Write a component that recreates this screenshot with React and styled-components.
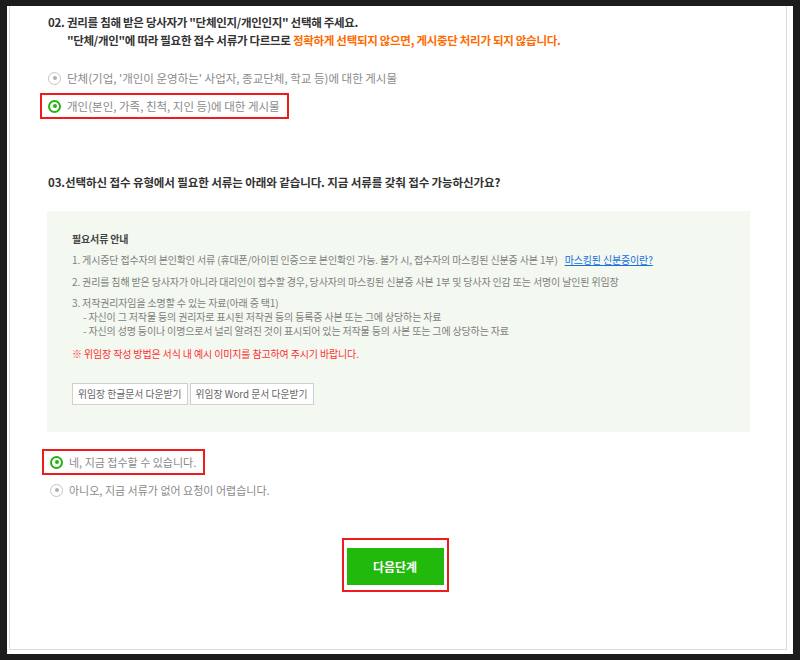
import React from "react"
import styled, { createGlobalStyle } from "styled-components"

const GlobalStyle = createGlobalStyle`
  html, body {
    margin: 0;
    padding: 0;
    background: #1c1c1c;
  }
  body {
    font-family: "Noto Sans CJK KR", "Noto Sans", sans-serif;
    color: #333;
  }
`

const Frame = styled.div`
  margin: 6px 0 0 7px;
  width: 786px;
  height: 648px;
  box-sizing: border-box;
  background: #fff;
  padding: 0 6px 4px 2px;
  display: flex;
`

const Panel = styled.div`
  flex: 1;
  border: 1px solid #dcdcdc;
  border-top: none;
  padding: 7px 36px 0 30px;
  display: flex;
  flex-direction: column;
`

const Question = styled.div`
  display: flex;
  margin-left: 8px;
  font-size: 11.5px;
  font-weight: 700;
  line-height: 18px;
  color: #333;
  letter-spacing: ${p => (p.$tight ? "-0.3px" : "-0.1px")};
`

const QNum = styled.span`
  flex: 0 0 auto;
  width: 15px;
  margin-right: 4px;
`

const Warn = styled.span`
  color: #ff6a00;
`

const Options = styled.div`
  display: flex;
  flex-direction: column;
  align-items: flex-start;
  gap: ${p => p.$gap || 2}px;
  margin-top: ${p => p.$top || 0}px;
  margin-left: ${p => p.$left || 0}px;
`

const Option = styled.label`
  display: inline-flex;
  align-items: center;
  gap: 6px;
  height: 26px;
  box-sizing: border-box;
  border: 2px solid ${p => (p.$marked ? "#ee1c1c" : "transparent")};
  padding: 0 7px 0 6px;
  font-size: ${p => p.$size || 11.5}px;
  color: #8a8a8a;
  cursor: pointer;
`

const Radio = styled.span`
  position: relative;
  width: 13px;
  height: 13px;
  box-sizing: border-box;
  border-radius: 50%;
  border: ${p => (p.$on ? "2px solid #26b30f" : "1px solid #c4c4c4")};
  flex: 0 0 auto;

  &::after {
    content: "";
    position: absolute;
    left: 50%;
    top: 50%;
    width: 4px;
    height: 4px;
    margin: -2px 0 0 -2px;
    border-radius: 50%;
    background: ${p => (p.$on ? "#26b30f" : "#b0b0b0")};
  }
`

const Guide = styled.div`
  margin: 20px 0 0 7px;
  background: #f3f8f0;
  padding: 21px 20px 27px 25px;
  font-size: 10px;
  line-height: 14px;
  color: #808080;
  letter-spacing: -0.15px;
`

const GuideTitle = styled.div`
  font-weight: 700;
  color: #444;
  margin-bottom: 7px;
`

const Item = styled.div`
  margin-top: ${p => p.$top || 0}px;
`

const Sub = styled.div`
  padding-left: 11px;
`

const Link = styled.a`
  color: #1a6fe0;
  text-decoration: underline;
  margin-left: 7px;
`

const Note = styled.div`
  margin-top: 9px;
  color: #ff3030;
`

const Downloads = styled.div`
  display: flex;
  gap: 2px;
  margin-top: 22px;
`

const DownButton = styled.button`
  margin: 0;
  height: 22px;
  padding: 0 5px;
  background: #fff;
  border: 1px solid #cfcfcf;
  font-family: inherit;
  font-size: 9.8px;
  color: #666;
  cursor: pointer;
`

const Footer = styled.div`
  display: flex;
  justify-content: center;
  margin-top: 35px;
`

const Highlight = styled.div`
  border: 2px solid #ee1c1c;
  padding: 8px 3px 5px 3px;
`

const NextButton = styled.button`
  display: block;
  width: 97px;
  height: 37px;
  border: none;
  background: #21b90c;
  color: #fff;
  font-family: inherit;
  font-size: 12px;
  font-weight: 700;
  cursor: pointer;
`

const SecondHeading = styled(Question)`
  margin-top: 54px;
`

export default function App() {
  return (
    <>
      <GlobalStyle />
      <Frame>
        <Panel>
          <Question $tight>
            <QNum>02.</QNum>
            <div>
              권리를 침해 받은 당사자가 "단체인지/개인인지" 선택해 주세요.
              <br />
              "단체/개인"에 따라 필요한 접수 서류가 다르므로{" "}
              <Warn>정확하게 선택되지 않으면, 게시중단 처리가 되지 않습니다.</Warn>
            </div>
          </Question>

          <Options $top={16}>
            <Option>
              <Radio />
              단체(기업, '개인이 운영하는' 사업자, 종교단체, 학교 등)에 대한 게시물
            </Option>
            <Option $marked>
              <Radio $on />
              개인(본인, 가족, 친척, 지인 등)에 대한 게시물
            </Option>
          </Options>

          <SecondHeading>
            03.선택하신 접수 유형에서 필요한 서류는 아래와 같습니다. 지금 서류를 갖춰 접수 가능하신가요?
          </SecondHeading>

          <Guide>
            <GuideTitle>필요서류 안내</GuideTitle>
            <Item>
              1. 게시중단 접수자의 본인확인 서류 (휴대폰/아이핀 인증으로 본인확인 가능. 불가 시, 접수자의 마스킹된 신분증 사본 1부)
              <Link href="#">마스킹된 신분증이란?</Link>
            </Item>
            <Item $top={8}>
              2. 권리를 침해 받은 당사자가 아니라 대리인이 접수할 경우, 당사자의 마스킹된 신분증 사본 1부 및 당사자 인감 또는 서명이 날인된 위임장
            </Item>
            <Item $top={7}>
              3. 저작권리자임을 소명할 수 있는 자료(아래 중 택1)
              <Sub>- 자신이 그 저작물 등의 권리자로 표시된 저작권 등의 등록증 사본 또는 그에 상당하는 자료</Sub>
              <Sub>- 자신의 성명 등이나 이명으로서 널리 알려진 것이 표시되어 있는 저작물 등의 사본 또는 그에 상당하는 자료</Sub>
            </Item>
            <Note>※ 위임장 작성 방법은 서식 내 예시 이미지를 참고하여 주시기 바랍니다.</Note>
            <Downloads>
              <DownButton>위임장 한글문서 다운받기</DownButton>
              <DownButton>위임장 Word 문서 다운받기</DownButton>
            </Downloads>
          </Guide>

          <Options $top={17} $left={2} $gap={2}>
            <Option $marked $size={11}>
              <Radio $on />
              네, 지금 접수할 수 있습니다.
            </Option>
            <Option $size={11}>
              <Radio />
              아니오, 지금 서류가 없어 요청이 어렵습니다.
            </Option>
          </Options>

          <Footer>
            <Highlight>
              <NextButton>다음단계</NextButton>
            </Highlight>
          </Footer>
        </Panel>
      </Frame>
    </>
  )
}
